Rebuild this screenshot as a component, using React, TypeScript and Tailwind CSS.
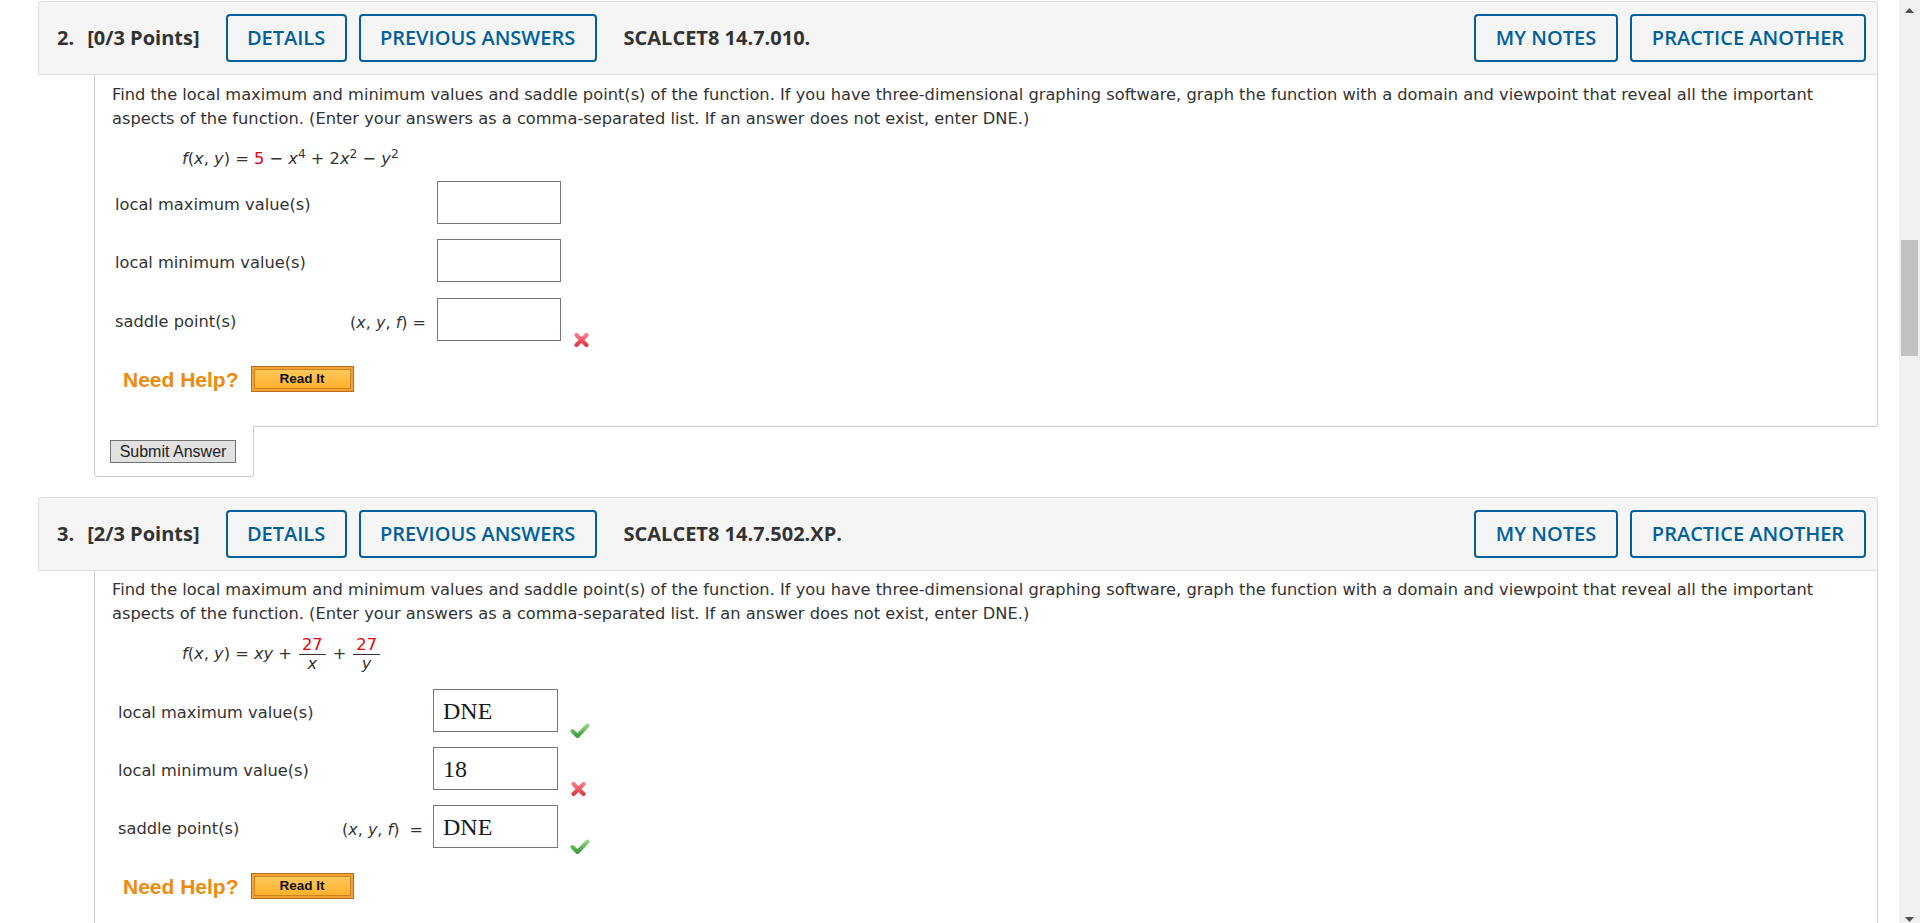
import React from "react";

function Header({ num, pts, code }: { num: string; pts: string; code: string }) {
  return (
    <div className="h-[74px] flex items-center border border-[#dedede] bg-[#f5f5f5] rounded-t-[3px] pl-[18px] pr-[11px] font-['Open_Sans',sans-serif] text-[20px]">
      <div className="font-bold text-[#333] flex">
        <span>{num}.</span>
        <span className="ml-[13px]">[{pts} Points]</span>
      </div>
      <div className="ml-[26px] w-[121px] h-[48px] border-2 border-[#00609c] rounded-[4px] text-[#00609c] font-semibold flex items-center justify-center">
        DETAILS
      </div>
      <div className="ml-[12px] w-[238px] h-[48px] border-2 border-[#00609c] rounded-[4px] text-[#00609c] font-semibold flex items-center justify-center">
        PREVIOUS ANSWERS
      </div>
      <div className="ml-[27px] font-bold text-[#333]">{code}</div>
      <div className="ml-auto flex gap-[12px]">
        <div className="w-[144px] h-[48px] border-2 border-[#00609c] rounded-[4px] text-[#00609c] font-semibold flex items-center justify-center">
          MY NOTES
        </div>
        <div className="w-[236px] h-[48px] border-2 border-[#00609c] rounded-[4px] text-[#00609c] font-semibold flex items-center justify-center">
          PRACTICE ANOTHER
        </div>
      </div>
    </div>
  );
}

function Check() {
  return (
    <svg width="20" height="17" viewBox="0 0 20 17">
      <defs>
        <linearGradient id="gck" x1="0" y1="0" x2="0" y2="1">
          <stop offset="0" stopColor="#8fd67f" />
          <stop offset="1" stopColor="#3f9b3f" />
        </linearGradient>
      </defs>
      <path d="M2.5 9 L7.5 14 L17.5 3.5" fill="none" stroke="url(#gck)" strokeWidth="4" strokeLinecap="round" strokeLinejoin="round" />
    </svg>
  );
}

function Cross() {
  return (
    <svg width="17" height="16" viewBox="0 0 17 16">
      <defs>
        <linearGradient id="gx" x1="0" y1="0" x2="0" y2="1">
          <stop offset="0" stopColor="#ff7a82" />
          <stop offset="1" stopColor="#e23b46" />
        </linearGradient>
      </defs>
      <path d="M3.5 3 L13.5 13 M13.5 3 L3.5 13" fill="none" stroke="url(#gx)" strokeWidth="4.2" strokeLinecap="round" />
    </svg>
  );
}

function Row({
  label,
  prefix,
  value,
  icon,
  labelW,
  inputW,
  mt,
}: {
  label: string;
  prefix?: React.ReactNode;
  value?: string;
  icon?: "check" | "cross";
  labelW: string;
  inputW: string;
  mt: string;
}) {
  return (
    <div className={`flex h-[43px] ${mt}`}>
      <div className={`${labelW} flex items-center justify-between pt-[6px] text-[16.25px] text-[#333]`}>
        <span>{label}</span>
        {prefix}
      </div>
      <div className={`${inputW} h-[43px] border border-[#777] bg-white flex items-center pl-[9px] font-['Liberation_Serif',serif] text-[24px] text-[#1a1a1a] leading-none`}>
        {value}
      </div>
      {icon && (
        <div className="ml-[12px] self-end translate-y-[7px] flex">
          {icon === "check" ? <Check /> : <Cross />}
        </div>
      )}
    </div>
  );
}

function ReadIt() {
  return (
    <div className="w-[103px] h-[26px] border border-[#b86e18] bg-[#f5a235] p-[2px]">
      <div className="w-full h-full border border-[#c9821f] bg-gradient-to-b from-[#ffc857] to-[#ffb12c] flex items-center justify-center font-['Liberation_Sans',Arial,sans-serif] font-bold text-[13.5px] text-[#111]">
        Read It
      </div>
    </div>
  );
}

function NeedHelp({ mt }: { mt: string }) {
  return (
    <div className={`flex items-center ml-[11px] ${mt}`}>
      <span className="font-['Liberation_Sans',Arial,sans-serif] font-bold text-[21px] text-[#f08a0c] leading-none">Need Help?</span>
      <div className="ml-[12px]">
        <ReadIt />
      </div>
    </div>
  );
}

function Intro() {
  return (
    <div className="text-[16.25px] leading-[24px] text-[#333]">
      Find the local maximum and minimum values and saddle point(s) of the function. If you have three-dimensional graphing software, graph the function with a domain and viewpoint that reveal all the important
      <br />
      aspects of the function. (Enter your answers as a comma-separated list. If an answer does not exist, enter DNE.)
    </div>
  );
}

function Frac({ num, den }: { num: string; den: string }) {
  return (
    <span className="inline-flex flex-col items-center mx-[7px]">
      <span className="text-[#e8000b] leading-[18px] px-[3px] border-b border-[#333]">{num}</span>
      <span className="italic leading-[18px]">{den}</span>
    </span>
  );
}

export default function App() {
  return (
    <div className="h-[923px] w-full flex overflow-hidden bg-white font-['DejaVu_Sans',Verdana,sans-serif]">
      <div className="flex-1 min-w-0 pl-[38px] pr-[21px] pt-px">
        {/* Question 2 */}
        <Header num="2" pts="0/3" code="SCALCET8 14.7.010." />
        <div className="ml-[56px] h-[352px] border-x border-b border-[#cbcbcb] rounded-br-[4px] pl-[17px] pt-[8px]">
          <Intro />
          <div className="ml-[70px] mt-[16px] text-[16.25px] leading-[24px] text-[#333]">
            <i>f</i>(<i>x</i>, <i>y</i>) = <span className="text-[#e8000b]">5</span> − <i>x</i>
            <sup>4</sup> + 2<i>x</i>
            <sup>2</sup> − <i>y</i>
            <sup>2</sup>
          </div>
          <div className="ml-[3px]">
            <Row mt="mt-[10px]" label="local maximum value(s)" labelW="w-[322px]" inputW="w-[124px]" />
            <Row mt="mt-[15px]" label="local minimum value(s)" labelW="w-[322px]" inputW="w-[124px]" />
            <Row
              mt="mt-[16px]"
              label="saddle point(s)"
              labelW="w-[322px] pr-[11px]"
              inputW="w-[124px]"
              icon="cross"
              prefix={
                <span className="text-[16px]">
                  (<i>x</i>, <i>y</i>, <i>f</i>) =
                </span>
              }
            />
          </div>
          <NeedHelp mt="mt-[25px]" />
        </div>
        <div className="ml-[56px] -mt-px relative w-[160px] h-[51px] bg-white border-x border-b border-[#cbcbcb] rounded-b-[4px] pl-[15px] pt-[14px]">
          <div className="w-[126px] h-[23px] border border-[#707070] bg-[#e1e1e1] flex items-center justify-center font-['Liberation_Sans',Arial,sans-serif] text-[16px] text-[#222] leading-none">
            Submit Answer
          </div>
        </div>

        {/* Question 3 */}
        <div className="mt-[20px]">
          <Header num="3" pts="2/3" code="SCALCET8 14.7.502.XP." />
        </div>
        <div className="ml-[56px] h-[600px] border-x border-[#cbcbcb] pl-[17px] pt-[7px]">
          <Intro />
          <div className="ml-[70px] mt-[10px] flex items-center text-[16.25px] text-[#333]">
            <span className="whitespace-pre">
              <i>f</i>(<i>x</i>, <i>y</i>) = <i>xy</i> +
            </span>
            <Frac num="27" den="x" />
            <span>+</span>
            <Frac num="27" den="y" />
          </div>
          <div className="ml-[6px]">
            <Row mt="mt-[16px]" label="local maximum value(s)" labelW="w-[315px]" inputW="w-[125px]" value="DNE" icon="check" />
            <Row mt="mt-[15px]" label="local minimum value(s)" labelW="w-[315px]" inputW="w-[125px]" value="18" icon="cross" />
            <Row
              mt="mt-[15px]"
              label="saddle point(s)"
              labelW="w-[315px] pr-[10px]"
              inputW="w-[125px]"
              value="DNE"
              icon="check"
              prefix={
                <span className="text-[16px] whitespace-pre">
                  (<i>x</i>, <i>y</i>, <i>f</i>)  =
                </span>
              }
            />
          </div>
          <NeedHelp mt="mt-[25px]" />
        </div>
      </div>

      {/* scrollbar */}
      <div className="w-[21px] h-full bg-[#f0f0f0] flex flex-col items-center shrink-0">
        <svg className="mt-[8px]" width="9" height="5" viewBox="0 0 9 5">
          <path d="M0 5 L4.5 0 L9 5 Z" fill="#505050" />
        </svg>
        <div className="mt-[227px] w-[17px] h-[116px] bg-[#c1c1c1]" />
        <svg className="mt-auto mb-[1px]" width="9" height="5" viewBox="0 0 9 5">
          <path d="M0 0 L9 0 L4.5 5 Z" fill="#505050" />
        </svg>
      </div>
    </div>
  );
}
